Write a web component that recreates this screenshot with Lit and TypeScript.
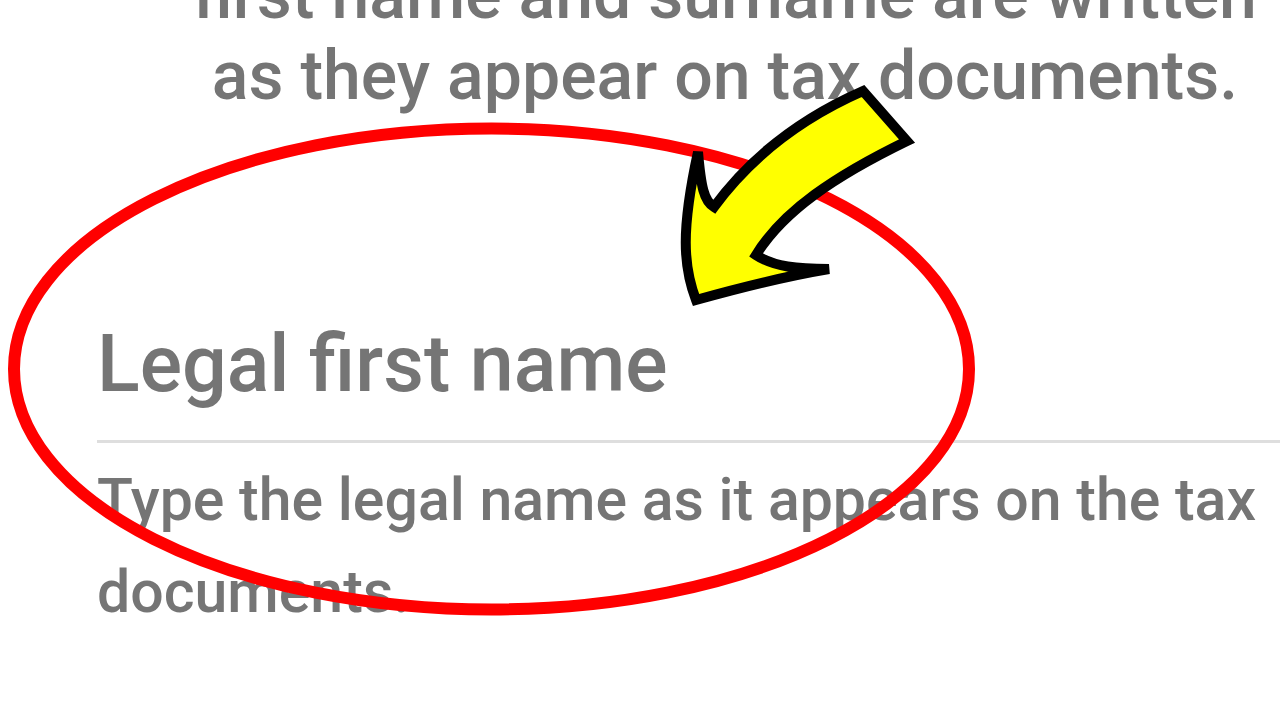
import { LitElement, html, css } from "lit";
import { customElement } from "lit/decorators.js";

@customElement("app-root")
export class AppRoot extends LitElement {
  static styles = css`
    :host {
      display: block;
      position: relative;
      height: 100vh;
      overflow: hidden;
      background: #fff;
      color: #757575;
      font-family: Roboto, "Liberation Sans", sans-serif;
      font-weight: 500;
    }
    .intro {
      margin: -45px 0 0 170px;
      font-size: 68px;
      line-height: 81px;
      text-align: center;
      white-space: nowrap;
    }
    .field {
      margin: 202px 0 0 97px;
    }
    .name {
      display: block;
      box-sizing: border-box;
      width: 100%;
      height: 124px;
      padding: 0 0 31px;
      border: 0;
      border-bottom: 3px solid #dedede;
      background: none;
      outline: none;
      color: inherit;
      font: inherit;
      font-size: 79px;
    }
    .name::placeholder {
      color: inherit;
      opacity: 1;
    }
    .hint {
      display: block;
      margin-top: 11px;
      font-size: 59px;
      line-height: 92px;
    }
    .marks {
      position: absolute;
      top: 0;
      left: 0;
      width: 100%;
      height: 100%;
      pointer-events: none;
    }
  `;

  render() {
    return html`
      <p class="intro">first name and surname are written<br />as they appear on tax documents.</p>
      <div class="field">
        <input class="name" id="name" type="text" placeholder="Legal first name" aria-label="Legal first name" aria-describedby="hint" />
        <label class="hint" id="hint" for="name">Type the legal name as it appears on the tax documents.</label>
      </div>
      <svg class="marks" viewBox="0 0 1280 720" preserveAspectRatio="xMinYMin meet" aria-hidden="true">
        <ellipse cx="491.5" cy="369" rx="477.5" ry="240.5" fill="none" stroke="#f00" stroke-width="12" />
        <path
          d="M863 91 L907 141 C835 176 783 211 756 255 C774 267 798 269 829 269 C787 276 739 288 696 300 C683 266 681 230 698 152 C701 187 704 201 714 207 C750 158 797 120 863 91 Z"
          fill="#ff0" stroke="#000" stroke-width="10" stroke-linejoin="miter" stroke-miterlimit="3" />
      </svg>
    `;
  }
}
